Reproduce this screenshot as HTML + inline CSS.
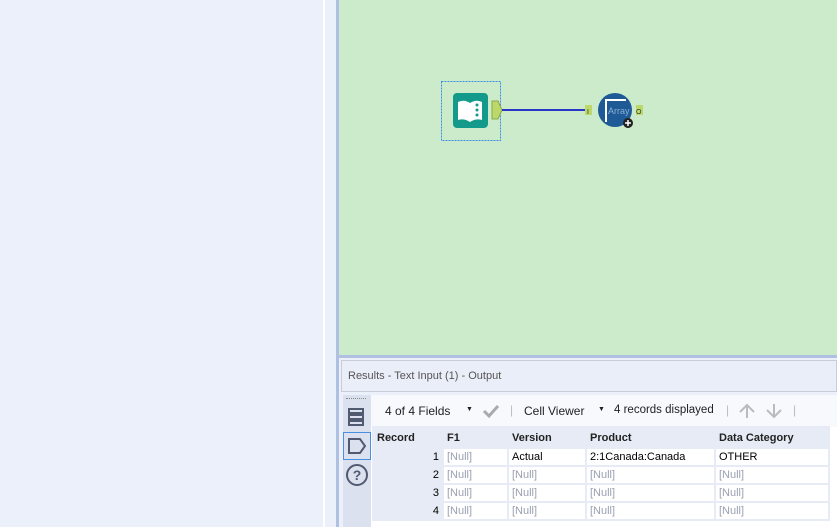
<!DOCTYPE html>
<html><head><style>
*{margin:0;padding:0;box-sizing:border-box}
body{width:837px;height:527px;overflow:hidden;background:#ecf0fa;font-family:"Liberation Sans",sans-serif;position:relative}
.a{position:absolute}
table{border-collapse:collapse;font-size:11px}
td{border:2px solid #e6ebf5;height:18px;padding:0 3px;white-space:nowrap}
th{border:2px solid #e6ebf5;height:21px;background:#e6ebf5;text-align:left;padding:0 3px;font-size:11px;color:#222}
.n{color:#9aa0b0}
</style></head><body>
<div class="a" style="left:323px;top:0;width:2px;height:527px;background:#fff"></div>
<div class="a" style="left:336px;top:0;width:3px;height:527px;background:#b0c0e0"></div>
<div class="a" style="left:339px;top:0;width:498px;height:355px;background:#cbebcb"></div>
<div class="a" style="left:339px;top:355px;width:498px;height:3px;background:#b0c0e0"></div>
<div class="a" style="left:341px;top:360px;width:496px;height:32px;border:1px solid #c8cdd8;background:#eaeef8;font-size:11px;color:#555;padding:9px 6px">Results - Text Input (1) - Output</div>
<div class="a" style="left:343px;top:395px;width:28px;height:132px;background:#dbe1ef"></div>
<div class="a" style="left:346px;top:398px;width:20px;border-top:1px dotted #888"></div>
<svg class="a" style="left:346px;top:406px" width="22" height="22"><g fill="none" stroke="#505a70" stroke-width="2"><rect x="3" y="3" width="14" height="4"/><rect x="3" y="9" width="14" height="4"/><rect x="3" y="15" width="14" height="4"/></g></svg>
<div class="a" style="left:343px;top:432px;width:28px;height:28px;border:1px solid #4a90e0"></div>
<svg class="a" style="left:345px;top:434px" width="24" height="24"><path d="M4 5h11l5 7-5 7H4z" fill="none" stroke="#505a70" stroke-width="2"/></svg>
<svg class="a" style="left:344px;top:462px" width="26" height="26"><circle cx="13" cy="13" r="10" fill="none" stroke="#505a70" stroke-width="2"/><text x="13" y="18" font-size="14" font-weight="bold" text-anchor="middle" fill="#505a70" font-family="Liberation Sans">?</text></svg>
<div class="a" style="left:371px;top:395px;width:466px;height:32px;background:#f7f9fd;font-size:12px;color:#222">
<span class="a" style="left:14px;top:9px">4 of 4 Fields</span><span class="a" style="left:95px;top:11px;font-size:7px">▼</span>
<svg class="a" style="left:110px;top:8px" width="20" height="16"><path d="M3 8l5 5 9-10" fill="none" stroke="#aaa" stroke-width="3"/></svg>
<span class="a" style="left:139px;top:8px;color:#bbb">|</span>
<span class="a" style="left:153px;top:9px">Cell Viewer</span><span class="a" style="left:227px;top:11px;font-size:7px">▼</span>
<span class="a" style="left:243px;top:9px;font-size:11.5px">4 records displayed</span>
<span class="a" style="left:355px;top:8px;color:#bbb">|</span>
<svg class="a" style="left:366px;top:7px" width="20" height="18"><path d="M10 16V3M3 10l7-7 7 7" fill="none" stroke="#bbb" stroke-width="2"/></svg>
<svg class="a" style="left:393px;top:7px" width="20" height="18"><path d="M10 2v13M3 8l7 7 7-7" fill="none" stroke="#bbb" stroke-width="2"/></svg>
<span class="a" style="left:422px;top:8px;color:#bbb">|</span>
</div>
<div class="a" style="left:371px;top:427px;width:466px;height:100px;background:#fff"></div>
<table class="a" style="left:372px;top:426px;width:458px;background:#fff">
<tr><th style="width:70px">Record</th><th style="width:65px">F1</th><th style="width:78px">Version</th><th style="width:129px">Product</th><th>Data Category</th></tr>
<tr><td style="text-align:right;background:#e6ebf5">1</td><td class="n">[Null]</td><td>Actual</td><td>2:1Canada:Canada</td><td>OTHER</td></tr>
<tr><td style="text-align:right;background:#e6ebf5">2</td><td class="n">[Null]</td><td class="n">[Null]</td><td class="n">[Null]</td><td class="n">[Null]</td></tr>
<tr><td style="text-align:right;background:#e6ebf5">3</td><td class="n">[Null]</td><td class="n">[Null]</td><td class="n">[Null]</td><td class="n">[Null]</td></tr>
<tr><td style="text-align:right;background:#e6ebf5">4</td><td class="n">[Null]</td><td class="n">[Null]</td><td class="n">[Null]</td><td class="n">[Null]</td></tr>
</table>
<svg class="a" style="left:430px;top:70px" width="220" height="80">
<rect x="11.5" y="11.5" width="59" height="59" fill="none" stroke="#3a8ee6" stroke-dasharray="2,1"/>
<rect x="23" y="23" width="35" height="35" rx="4" fill="#139a8a"/>
<path d="M28 32q6-3 12 1q6-4 12-1v18q-6-2-12 2q-6-4-12-2z" fill="#fff"/>
<circle cx="47" cy="35" r="1.5" fill="#139a8a"/><circle cx="47" cy="40" r="1.5" fill="#139a8a"/><circle cx="47" cy="45" r="1.5" fill="#139a8a"/>
<path d="M62 31h6l4 9-4 9h-6z" fill="#bcd86a" stroke="#8aa84a"/>
<line x1="72" y1="40" x2="157" y2="40" stroke="#2a36c8" stroke-width="2"/>
<path d="M155 35h7v10h-7z" fill="#bcd86a"/><text x="157" y="44" font-size="7" fill="#333">I</text>
<circle cx="185" cy="40" r="17" fill="#1e5a96"/>
<path d="M176 52V30h20" fill="none" stroke="#fff" stroke-width="2"/>
<text x="178" y="44" font-size="9" fill="#8ab0d8">Array</text>
<path d="M206 35h7v10h-7z" fill="#bcd86a"/><text x="206" y="44" font-size="7" fill="#333">O</text>
<circle cx="198" cy="53" r="5" fill="#222"/><path d="M195 53h6M198 50v6" stroke="#fff" stroke-width="1.5"/>
</svg>
</body></html>
